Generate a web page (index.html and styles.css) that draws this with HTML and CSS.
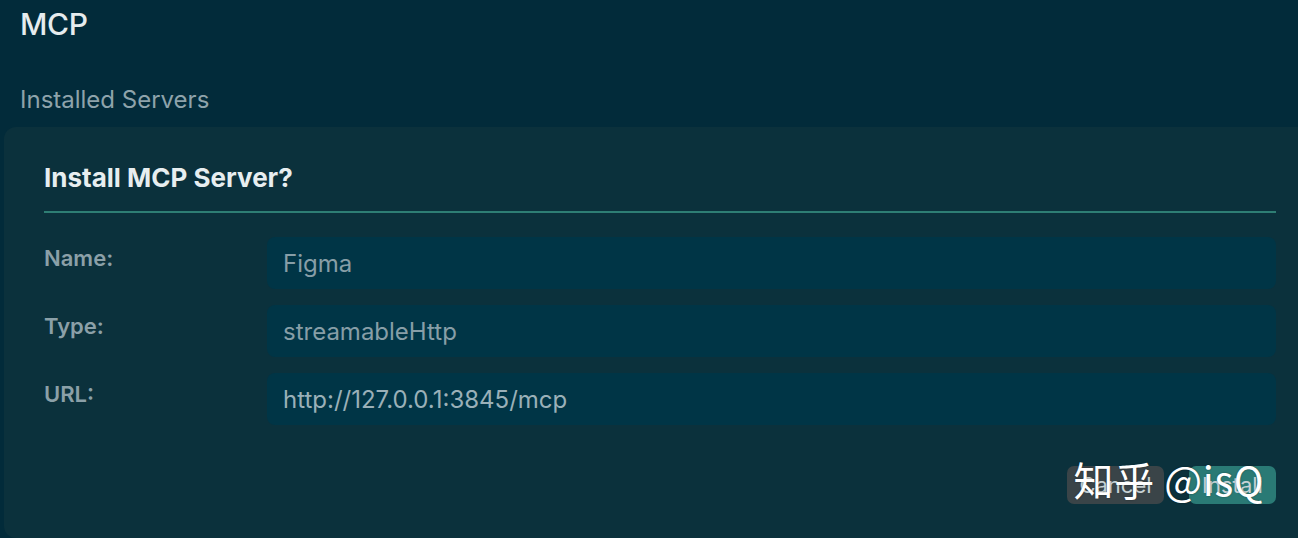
FILE: index.html
```html
<!DOCTYPE html>
<html>
<head>
<meta charset="utf-8">
<link rel="stylesheet" href="styles.css">
</head>
<body>
<div class="page">
  <h1 class="title">MCP</h1>
  <h2 class="section">Installed Servers</h2>
  <div class="dialog">
    <h3 class="dialog-title">Install MCP Server?</h3>
    <div class="divider"></div>
    <div class="form">
      <div class="label">Name:</div>
      <div class="field">Figma</div>
      <div class="label">Type:</div>
      <div class="field">streamableHttp</div>
      <div class="label">URL:</div>
      <div class="field field-url">http://127.0.0.1:3845/mcp</div>
    </div>
    <div class="actions">
      <button class="btn btn-cancel">Cancel</button>
      <button class="btn btn-install">Install</button>
      <div class="watermark">知乎 @isQ</div>
    </div>
  </div>
</div>
</body>
</html>
```

FILE: styles.css
```css
html, body {
  margin: 0;
  padding: 0;
  background: #022b3a;
  overflow: hidden;
}
body {
  width: 1298px;
  height: 538px;
  font-family: Inter, "Noto Sans", sans-serif;
}
.page {
  padding: 0 0 0 4px;
}
.title {
  margin: 0;
  padding: 5px 0 0 16px;
  font-size: 30px;
  font-weight: 500;
  line-height: 38px;
  color: #e6ecee;
  letter-spacing: -0.3px;
}
.section {
  margin: 0;
  padding: 42px 0 0 16px;
  font-size: 24px;
  font-weight: 400;
  line-height: 30px;
  color: #8ea3ab;
}
.dialog {
  margin-top: 12px;
  width: 1340px;
  height: 411px;
  box-sizing: border-box;
  background: #0b313c;
  border-radius: 12px;
  padding: 32px 0 0 40px;
  position: relative;
}
.dialog-title {
  margin: 0;
  font-size: 26px;
  font-weight: 700;
  line-height: 38px;
  color: #e7eef0;
}
.divider {
  margin-top: 14px;
  width: 1232px;
  height: 2px;
  background: #2e7e74;
}
.form {
  margin-top: 24px;
  width: 1232px;
  display: grid;
  grid-template-columns: 223px 1fr;
  row-gap: 16px;
}
.label {
  font-size: 22px;
  font-weight: 600;
  color: #8ba0a8;
  padding-top: 8px;
  line-height: 26px;
}
.field {
  height: 52px;
  box-sizing: border-box;
  background: #003546;
  border-radius: 8px;
  padding: 0 16px;
  display: flex;
  align-items: center;
  font-size: 24px;
  color: #879ea7;
}
.field-url {
  color: #9ab0b8;
}
.actions {
  width: 1232px;
  margin-top: 41px;
  display: flex;
  justify-content: flex-end;
  gap: 25px;
  position: relative;
}
.btn {
  height: 38px;
  border: none;
  border-radius: 7px;
  font-family: Inter, "Noto Sans", sans-serif;
  font-size: 22px;
  color: #c7d2d5;
  padding: 0;
}
.btn-cancel {
  width: 97px;
  background: #3a4448;
}
.btn-install {
  width: 87px;
  background: #2a7a75;
}
.watermark {
  position: absolute;
  right: 12px;
  top: -12px;
  font-family: "Noto Sans CJK SC", "Noto Sans", sans-serif;
  font-size: 40px;
  line-height: 50px;
  color: #ffffff;
  white-space: nowrap;
  letter-spacing: 0.6px;
  text-shadow: 0 0 2px rgba(0,0,0,0.4);
}
```
